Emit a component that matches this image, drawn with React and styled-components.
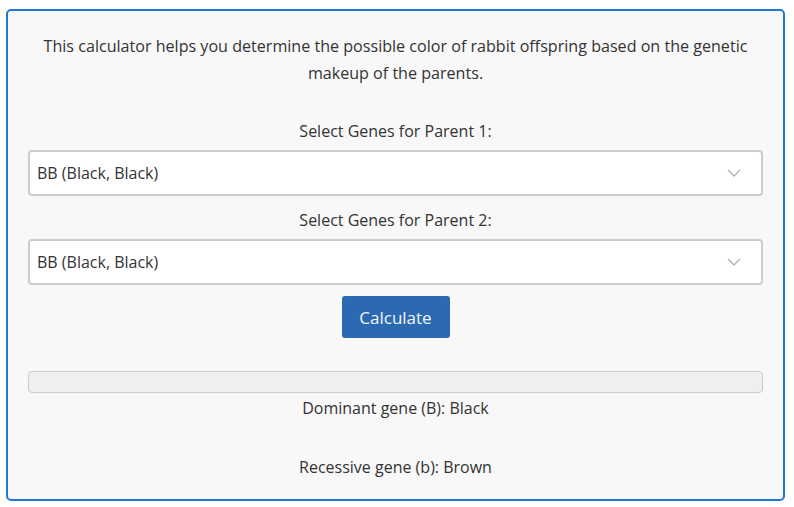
import styled, { createGlobalStyle } from 'styled-components'

const GlobalStyle = createGlobalStyle`
  body {
    margin: 0;
    background: #ffffff;
    font-family: 'Open Sans', 'Noto Sans', sans-serif;
    color: #333333;
  }
`

const Card = styled.div`
  box-sizing: border-box;
  width: 779px;
  height: 492px;
  margin: 9px 0 0 6px;
  padding: 22px 20px 0;
  background-color: #f8f8f8;
  border: 2px solid #1f78d6;
  border-radius: 5px;
  display: flex;
  flex-direction: column;
  align-items: center;
`

const Intro = styled.p`
  margin: 0 0 33px;
  font-size: 16.1px;
  line-height: 27px;
  text-align: center;
`

const Label = styled.label`
  font-size: 16px;
  line-height: 22px;
  margin-bottom: 8px;
`

const SelectBox = styled.div`
  box-sizing: border-box;
  width: 100%;
  height: 46px;
  margin-bottom: ${(p) => p.$gap}px;
  padding: 0 20px 0 7px;
  background: #ffffff;
  border: 2px solid #cccccc;
  border-radius: 4px;
  display: flex;
  align-items: center;
  justify-content: space-between;
  font-size: 16px;
`

const Chevron = styled.svg`
  width: 14px;
  height: 8px;
`

const Button = styled.button`
  width: 108px;
  height: 42px;
  margin-top: 11px;
  background-color: #2b69b1;
  color: #f2f6fb;
  border: none;
  border-radius: 3px;
  font-family: inherit;
  font-size: 17px;
  cursor: pointer;
`

const Progress = styled.div`
  box-sizing: border-box;
  width: 100%;
  height: 22px;
  margin-top: 33px;
  background: #efefef;
  border: 1px solid #cccccc;
  border-radius: 4px;
`

const Result = styled.p`
  margin: ${(p) => p.$top}px 0 0;
  font-size: 16px;
  line-height: 22px;
`

const Select = ({ value, gap }) => (
  <SelectBox $gap={gap}>
    <span>{value}</span>
    <Chevron viewBox="0 0 14 8">
      <path d="M1 1l6 6 6-6" fill="none" stroke="#b0b0b0" strokeWidth="1.4" />
    </Chevron>
  </SelectBox>
)

const App = () => (
  <>
    <GlobalStyle />
    <Card>
      <Intro>
        This calculator helps you determine the possible color of rabbit offspring based on the genetic
        <br />
        makeup of the parents.
      </Intro>
      <Label>Select Genes for Parent 1:</Label>
      <Select value="BB (Black, Black)" gap={13} />
      <Label>Select Genes for Parent 2:</Label>
      <Select value="BB (Black, Black)" gap={0} />
      <Button>Calculate</Button>
      <Progress />
      <Result $top={4}>Dominant gene (B): Black</Result>
      <Result $top={37}>Recessive gene (b): Brown</Result>
    </Card>
  </>
)

export default App
